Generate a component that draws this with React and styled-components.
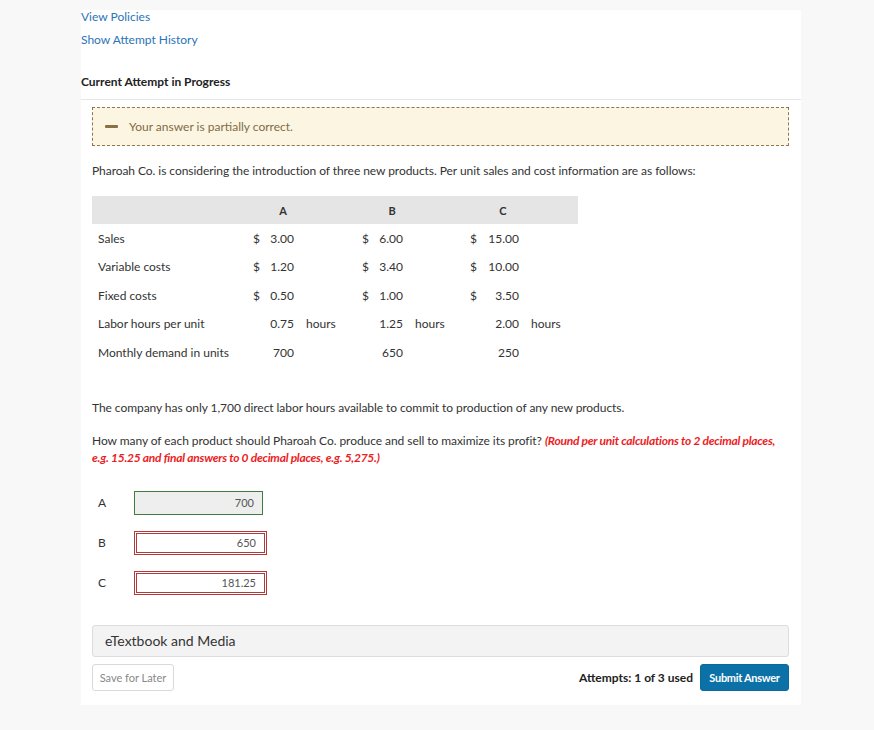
import React from 'react';
import styled, { createGlobalStyle, css } from 'styled-components';

const GlobalStyle = createGlobalStyle`
  body {
    margin: 0;
    background: #f8f8f8;
    font-family: Lato, "Open Sans", sans-serif;
    color: #333;
  }
`

const Page = styled.div`
  padding: 10px 0 0 81px;
  min-height: 720px;
`

const Card = styled.div`
  width: 720px;
  background: #fff;
  padding-bottom: 14px;
`

const Links = styled.div`
  display: flex;
  flex-direction: column;
  gap: 9px;
  align-items: flex-start;
`

const Link = styled.a`
  font-size: 12px;
  line-height: 14px;
  color: #2b74b8;
  text-decoration: none;
  cursor: pointer;
`

const Heading = styled.div`
  margin-top: 27px;
  font-size: 12px;
  line-height: 16px;
  font-weight: 700;
  color: #222;
  padding-bottom: 9px;
  border-bottom: 1px solid #e6e6e6;
`

const Content = styled.div`
  padding: 7px 12px 0 11px;
`

const Alert = styled.div`
  height: 39px;
  box-sizing: border-box;
  border: 1px dashed #8f774b;
  background: #fcf5e2;
  display: flex;
  align-items: center;
  padding-left: 12px;
  gap: 11px;
  font-size: 12px;
  color: #7f6c45;
`

const Minus = styled.span`
  width: 13px;
  height: 3px;
  background: #8a7142;
  border-radius: 1px;
`

const Text = styled.p`
  margin: ${p => p.$top}px 0 0;
  font-size: 12px;
  line-height: 17px;
  letter-spacing: -0.06px;
  color: #333;
`

const Hint = styled.span`
  color: #ec1c24;
  font-weight: 700;
  font-style: italic;
  letter-spacing: -0.25px;
`

const Table = styled.div`
  margin-top: 17px;
  width: 486px;
  font-size: 12px;
  color: #333;
`

const HeadRow = styled.div`
  display: grid;
  grid-template-columns: 161px 60px 49px 60px 51px 60px 45px;
  height: 28px;
  align-items: center;
  background: #e5e5e5;
  font-size: 11px;
  font-weight: 700;
`

const HeadCell = styled.div`
  text-align: center;
`

const Row = styled.div`
  display: grid;
  grid-template-columns: 161px 12px 29px 68px 12px 29px 67px 12px 37px 59px;
  height: 28.5px;
  align-items: center;
`

const Cell = styled.div`
  white-space: nowrap;
  ${p => p.$kind === 'label' && css`padding-left: 6px;`}
  ${p => p.$kind === 'value' && css`text-align: right;`}
  ${p => p.$kind === 'unit' && css`padding-left: 12px;`}
`

const Answers = styled.div`
  margin-top: 25px;
  display: flex;
  flex-direction: column;
  gap: 16px;
`

const AnswerRow = styled.div`
  display: flex;
  align-items: center;
  height: 24px;
`

const AnswerLabel = styled.span`
  width: 42px;
  padding-left: 6px;
  box-sizing: border-box;
  font-size: 12px;
  color: #333;
`

const AnswerBox = styled.div`
  box-sizing: border-box;
  height: 24px;
  display: flex;
  align-items: center;
  justify-content: flex-end;
  font-size: 11px;
  color: #555;
  ${p => p.$correct ? css`
    width: 129px;
    border: 1px solid #3e7d3e;
    background: #eee;
    padding-right: 8px;
  ` : css`
    width: 133px;
    border: 3px double #b23a3a;
    background: #fff;
    padding-right: 8px;
  `}
`

const MediaBar = styled.div`
  margin-top: 30px;
  height: 32px;
  box-sizing: border-box;
  background: #f3f3f3;
  border: 1px solid #dcdcdc;
  border-radius: 3px;
  display: flex;
  align-items: center;
  padding-left: 12px;
  font-size: 14px;
  color: #333;
`

const Footer = styled.div`
  margin-top: 7px;
  display: flex;
  align-items: center;
`

const Button = styled.button`
  height: 27px;
  box-sizing: border-box;
  border-radius: 3px;
  font-family: Lato, sans-serif;
  font-size: 11px;
  cursor: pointer;
  ${p => p.$primary ? css`
    width: 89px;
    background: #0b71a6;
    border: 1px solid #0b6a9c;
    color: #fff;
    font-weight: 700;
    letter-spacing: -0.3px;
  ` : css`
    width: 82px;
    background: #fff;
    border: 1px solid #d9d9d9;
    color: #888;
  `}
`

const Attempts = styled.span`
  margin-left: auto;
  margin-right: 7px;
  font-size: 12px;
  font-weight: 700;
  color: #222;
`

const rows = [
  { label: 'Sales', dollar: true, values: ['3.00', '6.00', '15.00'] },
  { label: 'Variable costs', dollar: true, values: ['1.20', '3.40', '10.00'] },
  { label: 'Fixed costs', dollar: true, values: ['0.50', '1.00', '3.50'] },
  { label: 'Labor hours per unit', unit: 'hours', values: ['0.75', '1.25', '2.00'] },
  { label: 'Monthly demand in units', values: ['700', '650', '250'] },
]

const answers = [
  { label: 'A', value: '700', correct: true },
  { label: 'B', value: '650' },
  { label: 'C', value: '181.25' },
]

function App() {
  return (
    <Page>
      <GlobalStyle />
      <Card>
        <Links>
          <Link>View Policies</Link>
          <Link>Show Attempt History</Link>
        </Links>
        <Heading>Current Attempt in Progress</Heading>
        <Content>
          <Alert>
            <Minus />
            Your answer is partially correct.
          </Alert>
          <Text $top={16}>
            Pharoah Co. is considering the introduction of three new products. Per unit sales and cost information are as follows:
          </Text>
          <Table>
            <HeadRow>
              <span />
              <HeadCell>A</HeadCell>
              <span />
              <HeadCell>B</HeadCell>
              <span />
              <HeadCell>C</HeadCell>
            </HeadRow>
            {rows.map(r => (
              <Row key={r.label}>
                <Cell $kind="label">{r.label}</Cell>
                {r.values.map((v, i) => (
                  <React.Fragment key={i}>
                    <Cell>{r.dollar ? '$' : ''}</Cell>
                    <Cell $kind="value">{v}</Cell>
                    <Cell $kind="unit">{r.unit || ''}</Cell>
                  </React.Fragment>
                ))}
              </Row>
            ))}
          </Table>
          <Text $top={32}>
            The company has only 1,700 direct labor hours available to commit to production of any new products.
          </Text>
          <Text $top={16}>
            How many of each product should Pharoah Co. produce and sell to maximize its profit?{' '}
            <Hint>(Round per unit calculations to 2 decimal places, e.g. 15.25 and final answers to 0 decimal places, e.g. 5,275.)</Hint>
          </Text>
          <Answers>
            {answers.map(a => (
              <AnswerRow key={a.label}>
                <AnswerLabel>{a.label}</AnswerLabel>
                <AnswerBox $correct={a.correct}>{a.value}</AnswerBox>
              </AnswerRow>
            ))}
          </Answers>
          <MediaBar>eTextbook and Media</MediaBar>
          <Footer>
            <Button>Save for Later</Button>
            <Attempts>Attempts: 1 of 3 used</Attempts>
            <Button $primary>Submit Answer</Button>
          </Footer>
        </Content>
      </Card>
    </Page>
  );
}

export default App;
